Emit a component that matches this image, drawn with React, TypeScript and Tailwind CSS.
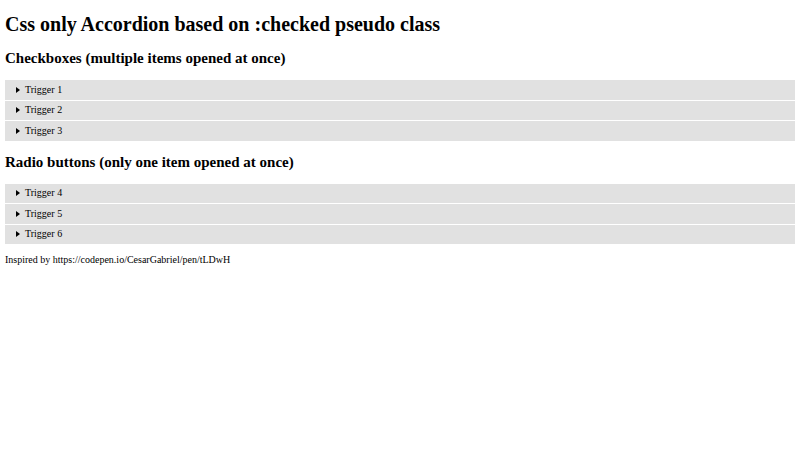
const checkboxes = ["Trigger 1", "Trigger 2", "Trigger 3"];
const radios = ["Trigger 4", "Trigger 5", "Trigger 6"];

function Trigger({ label }: { label: string }) {
  return (
    <div className="flex h-[19.5px] items-center bg-[#e1e1e1] pl-[11px] text-[10px] leading-none">
      <span className="mr-[5px] h-0 w-0 border-y-[3px] border-l-[4px] border-y-transparent border-l-black" />
      <span>{label}</span>
    </div>
  );
}

export default function App() {
  return (
    <main className="min-h-screen bg-white px-[5px] pt-[12px] font-['Liberation_Serif',serif] text-black">
      <h1 className="text-[20px] font-bold leading-[24px]">Css only Accordion based on :checked pseudo class</h1>

      <h2 className="mt-[13px] text-[15px] font-bold leading-[18px]">Checkboxes (multiple items opened at once)</h2>
      <div className="mt-[13px] flex flex-col gap-[1px]">
        {checkboxes.map((t) => (
          <Trigger key={t} label={t} />
        ))}
      </div>

      <h2 className="mt-[12px] text-[15px] font-bold leading-[18px]">Radio buttons (only one item opened at once)</h2>
      <div className="mt-[13px] flex flex-col gap-[1px]">
        {radios.map((t) => (
          <Trigger key={t} label={t} />
        ))}
      </div>

      <p className="mt-[10px] text-[10px] leading-[12px]">Inspired by https://codepen.io/CesarGabriel/pen/tLDwH</p>
    </main>
  );
}
